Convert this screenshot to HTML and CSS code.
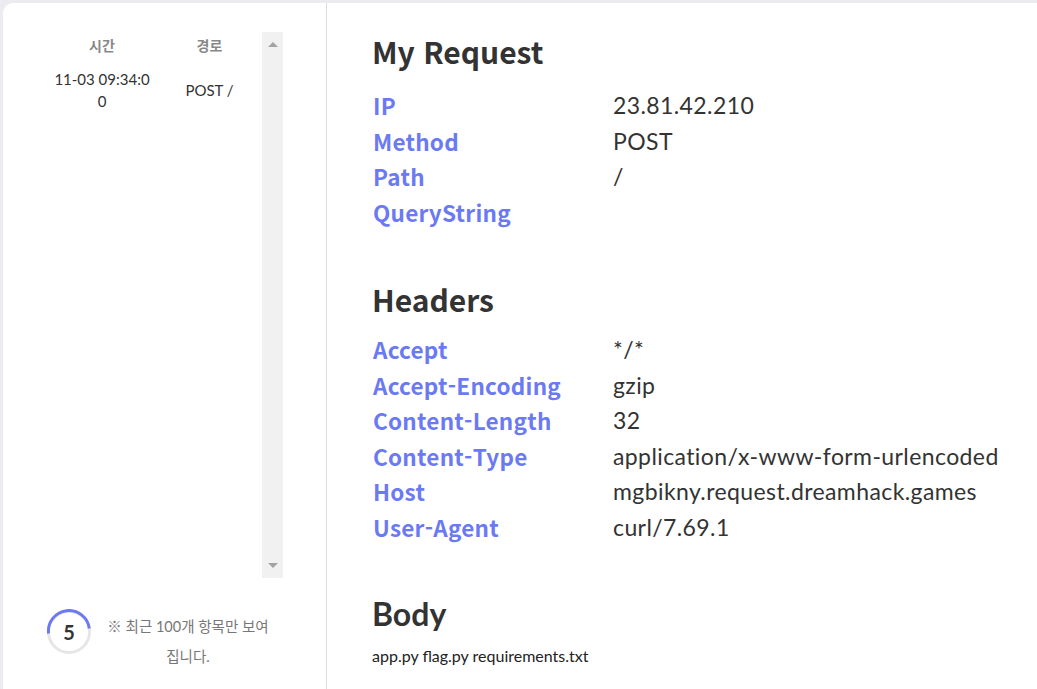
FILE: index.html
```html
<!DOCTYPE html>
<html lang="ko">
<head>
<meta charset="utf-8">
<title>My Request</title>
<link rel="stylesheet" href="styles.css">
</head>
<body>
<div class="app">
  <aside class="side">
    <div class="list">
      <div class="table">
        <div class="thead">
          <div class="th c1">시간</div>
          <div class="th c2">경로</div>
        </div>
        <div class="tr">
          <div class="td c1">11-03 09:34:00</div>
          <div class="td c2">POST /</div>
        </div>
      </div>
      <div class="scrollbar">
        <span class="arrow up"></span>
        <span class="arrow down"></span>
      </div>
    </div>
    <div class="footer">
      <div class="timer">
        <svg width="46" height="46" viewBox="0 0 46 46">
          <circle cx="23" cy="23" r="20.5" fill="none" stroke="#e6e6e6" stroke-width="3"/>
          <path d="M2.6 24.5 A20.5 20.5 0 0 1 43.3 19.5" fill="none" stroke="#6b7af3" stroke-width="3"/>
        </svg>
        <span class="timer-num">5</span>
      </div>
      <p class="note">※ 최근 100개 항목만 보여집니다.</p>
    </div>
  </aside>
  <main class="main">
    <h2 class="title">My Request</h2>
    <div class="kv first">
      <div class="k">IP</div><div class="v">23.81.42.210</div>
      <div class="k">Method</div><div class="v">POST</div>
      <div class="k">Path</div><div class="v">/</div>
      <div class="k">QueryString</div><div class="v"></div>
    </div>
    <h2 class="title spaced">Headers</h2>
    <div class="kv">
      <div class="k">Accept</div><div class="v">*/*</div>
      <div class="k">Accept-Encoding</div><div class="v">gzip</div>
      <div class="k">Content-Length</div><div class="v">32</div>
      <div class="k">Content-Type</div><div class="v">application/x-www-form-urlencoded</div>
      <div class="k">Host</div><div class="v">mgbikny.request.dreamhack.games</div>
      <div class="k">User-Agent</div><div class="v">curl/7.69.1</div>
    </div>
    <h2 class="title spaced lato">Body</h2>
    <p class="body-text">app.py flag.py requirements.txt</p>
  </main>
</div>
</body>
</html>
```

FILE: styles.css
```css
html, body {
  margin: 0;
  padding: 0;
}
body {
  background: #ececf0;
  font-family: Lato, "Noto Sans CJK KR", sans-serif;
  color: #333;
  height: 689px;
  overflow: hidden;
}
.app {
  display: flex;
  padding: 3px 0 0 3px;
  height: 686px;
}
.side {
  width: 324px;
  background: #fff;
  border-top-left-radius: 10px;
  border-right: 1px solid #dcdcdf;
  box-sizing: border-box;
  padding: 29px 0 0 44px;
  display: flex;
  flex-direction: column;
}
.list {
  display: flex;
  height: 546px;
}
.table {
  width: 215px;
}
.thead, .tr {
  display: flex;
}
.c1 { width: 110px; }
.c2 { width: 105px; }
.th {
  font-family: "Noto Sans CJK KR", sans-serif;
  font-weight: 700;
  font-size: 14px;
  color: #888;
  text-align: center;
  line-height: 26px;
}
.tr {
  align-items: center;
  padding: 10px 0;
}
.td {
  font-size: 15px;
  line-height: 22px;
  text-align: center;
  color: #333;
  box-sizing: border-box;
  padding: 0 6px;
  word-break: break-all;
}
.scrollbar {
  width: 21px;
  background: #f1f1f1;
  display: flex;
  flex-direction: column;
  justify-content: space-between;
  align-items: center;
  padding: 10px 0;
  box-sizing: border-box;
}
.arrow {
  width: 0;
  height: 0;
  border-left: 5px solid transparent;
  border-right: 5px solid transparent;
}
.arrow.up { border-bottom: 5px solid #a3a3a3; }
.arrow.down { border-top: 5px solid #a3a3a3; }
.footer {
  display: flex;
  align-items: flex-start;
  margin-top: 31px;
}
.timer {
  position: relative;
  width: 46px;
  height: 46px;
  margin-left: -1px;
}
.timer svg { display: block; }
.timer-num {
  position: absolute;
  inset: 0;
  display: flex;
  align-items: center;
  justify-content: center;
  font-size: 20px;
  font-weight: 700;
  color: #333;
}
.note {
  margin: 3px 0 0 12px;
  width: 168px;
  font-size: 14.5px;
  line-height: 30px;
  color: #777;
  text-align: center;
}
.main {
  flex: 1;
  background: #fff;
  padding: 28px 0 0 45px;
}
.title {
  margin: 0;
  font-family: "Noto Sans CJK KR", sans-serif;
  font-weight: 700;
  font-size: 30px;
  line-height: 40px;
  color: #333;
}
.title.spaced { margin-top: 49px; }
.title.lato {
  font-family: Lato, sans-serif;
  font-size: 32px;
}
.kv {
  display: grid;
  grid-template-columns: 241px 1fr;
  margin-top: 13px;
}
.kv.first { margin-top: 17px; }
.k, .v {
  line-height: 35.5px;
  height: 35.5px;
  white-space: nowrap;
}
.k {
  font-family: "Noto Sans CJK KR", sans-serif;
  font-weight: 700;
  font-size: 22.5px;
  letter-spacing: 0.25px;
  padding-left: 1px;
  color: #6b7af3;
}
.v {
  font-size: 23px;
  letter-spacing: 0.4px;
  color: #333;
}
.body-text {
  margin: 12px 0 0;
  font-size: 16px;
  line-height: 20px;
  color: #222;
}
```
